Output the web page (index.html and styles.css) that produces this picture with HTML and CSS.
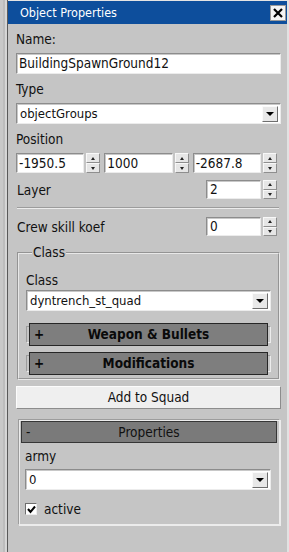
FILE: index.html
```html
<!DOCTYPE html>
<html lang="en">
<head>
    <meta charset="UTF-8">
    <title>Object Properties</title>
    <link rel="stylesheet" href="styles.css">
</head>
<body>
    <div class="screen">
        <div class="dock"></div>
        <div class="window">
            <div class="titlebar">
                <span class="title">Object Properties</span>
                <span class="close">
                    <svg width="10" height="10" viewBox="0 0 10 10"><path d="M1 1L9 9M9 1L1 9" stroke="#000" stroke-width="2.2"/></svg>
                </span>
            </div>
            <div class="content">
                <div class="label">Name:</div>
                <div class="field">BuildingSpawnGround12</div>

                <div class="label">Type</div>
                <div class="combo"><span>objectGroups</span><span class="drop"></span></div>

                <div class="label">Position</div>
                <div class="row position">
                    <div class="spinbox"><div class="field">-1950.5</div><div class="spin"><span class="up"></span><span class="down"></span></div></div>
                    <div class="spinbox"><div class="field">1000</div><div class="spin"><span class="up"></span><span class="down"></span></div></div>
                    <div class="spinbox"><div class="field">-2687.8</div><div class="spin"><span class="up"></span><span class="down"></span></div></div>
                </div>

                <div class="row pair layer">
                    <span>Layer</span>
                    <div class="spinbox small"><div class="field">2</div><div class="spin"><span class="up"></span><span class="down"></span></div></div>
                </div>

                <div class="separator"></div>

                <div class="row pair crew">
                    <span>Crew skill koef</span>
                    <div class="spinbox small"><div class="field">0</div><div class="spin"><span class="up"></span><span class="down"></span></div></div>
                </div>

                <fieldset class="group">
                    <legend>Class</legend>
                    <div class="label">Class</div>
                    <div class="combo"><span>dyntrench_st_quad</span><span class="drop"></span></div>
                    <div class="fold"><div class="fold-head"><span class="sign">+</span>Weapon &amp; Bullets</div></div>
                    <div class="fold"><div class="fold-head"><span class="sign">+</span>Modifications</div></div>
                </fieldset>

                <div class="button">Add to Squad</div>

                <div class="props">
                    <div class="props-head"><span class="sign">-</span>Properties</div>
                    <div class="label">army</div>
                    <div class="combo"><span>0</span><span class="drop"></span></div>
                    <label class="check">
                        <span class="box"><svg width="9" height="9" viewBox="0 0 9 9"><path d="M1 4L3.5 7L8 1.5" fill="none" stroke="#000" stroke-width="2"/></svg></span>
                        active
                    </label>
                </div>
            </div>
        </div>
    </div>
</body>
</html>
```

FILE: styles.css
```css
* {
    box-sizing: border-box;
}
body {
    margin: 0;
    background-color: #c4c4c4;
    font-family: "DejaVu Sans Condensed", "DejaVu Sans", sans-serif;
    font-size: 13.5px;
    color: #111111;
}
.screen {
    display: flex;
    height: 552px;
}
.dock {
    width: 8px;
    background-color: #bdbdbd;
    border-left: 3px solid #c9c9c9;
    border-right: 1px solid #5a5a5a;
    box-shadow: inset -2px 0 0 #d6d6d6;
}
.window {
    flex: 1;
    border-top: 1px solid #e4e4e4;
    border-right: 2px solid #e2e2e2;
    background-color: #c5c5c5;
}

.titlebar {
    height: 23px;
    background-color: #0d4e9c;
    display: flex;
    align-items: center;
    justify-content: space-between;
    padding: 0 1px 0 12px;
}
.title {
    color: #ffffff;
    font-size: 12.5px;
}
.close {
    width: 16px;
    height: 16px;
    background-color: #f4f4f4;
    border: 1px solid #9a9a9a;
    display: flex;
    align-items: center;
    justify-content: center;
}

.content {
    padding: 7px 6px 0 8px;
}
.label {
    height: 17px;
    line-height: 17px;
    margin-bottom: 5px;
}
.field {
    height: 21px;
    line-height: 19px;
    padding-left: 2px;
    background-color: #ffffff;
    border: 1px solid;
    border-color: #8c8c8c #ececec #ececec #8c8c8c;
    box-shadow: inset 1px 1px 0 #c8c8c8;
    font-size: 13.5px;
    white-space: nowrap;
    overflow: hidden;
}
.content > .field,
.content > .combo {
    margin-bottom: 7px;
}
.combo {
    height: 21px;
    display: flex;
    align-items: center;
    justify-content: space-between;
    background-color: #ffffff;
    border: 1px solid;
    border-color: #8c8c8c #ececec #ececec #8c8c8c;
    box-shadow: inset 1px 1px 0 #c8c8c8;
    padding: 0 2px 0 3px;
    font-size: 13px;
}
.drop {
    width: 16px;
    height: 16px;
    background-color: #e8e8e8;
    border: 1px solid;
    border-color: #fafafa #6e6e6e #6e6e6e #fafafa;
    display: flex;
    align-items: center;
    justify-content: center;
}
.drop::after {
    content: '';
    border-left: 4px solid transparent;
    border-right: 4px solid transparent;
    border-top: 4px solid #000000;
}

.row {
    display: flex;
    align-items: center;
}
.position {
    gap: 4px;
    padding-right: 4px;
    margin-bottom: 7px;
}
.position .spinbox {
    flex: 1;
}
.spinbox {
    display: flex;
    gap: 2px;
    height: 20px;
}
.spinbox .field {
    flex: 1;
    height: 20px;
    line-height: 18px;
}
.spin {
    width: 14px;
    display: flex;
    flex-direction: column;
}
.spin span {
    flex: 1;
    background-color: #e6e6e6;
    border: 1px solid;
    border-color: #f8f8f8 #8e8e8e #8e8e8e #f8f8f8;
    display: flex;
    align-items: center;
    justify-content: center;
}
.spin .up::after {
    content: '';
    border-left: 2px solid transparent;
    border-right: 2px solid transparent;
    border-bottom: 3px solid #222222;
}
.spin .down::after {
    content: '';
    border-left: 2px solid transparent;
    border-right: 2px solid transparent;
    border-top: 3px solid #222222;
}
.pair {
    justify-content: space-between;
    padding: 0 4px 0 1px;
}
.pair .spinbox {
    width: 71px;
    height: 19px;
}
.pair .field {
    height: 19px;
    line-height: 17px;
    padding-left: 3px;
}
.layer {
    margin-bottom: 8px;
}
.separator {
    height: 2px;
    margin: 0 2px 0 1px;
    border-top: 1px solid #9c9c9c;
    border-bottom: 1px solid #ececec;
}
.crew {
    margin-top: 8px;
}

.group {
    margin: 8px 1px 0 1px;
    padding: 11px 7px 0 7px;
    border: 2px groove #e8e8e8;
}
.group legend {
    padding: 0 1px;
    margin-left: 6px;
    line-height: 17px;
}
.group .label {
    margin-bottom: 1px;
}
.group .combo {
    margin-bottom: 12px;
}
.fold {
    position: relative;
    margin-bottom: 6px;
    padding: 0 3px;
}
.fold:last-child {
    margin-bottom: 3px;
}
.fold::before {
    content: '';
    position: absolute;
    left: 0;
    right: 0;
    top: 3px;
    bottom: 3px;
    border: 1px solid #9c9c9c;
    border-right-color: #ececec;
    border-bottom-color: #ececec;
}
.fold-head {
    position: relative;
    height: 23px;
    line-height: 21px;
    background-color: #7e7e7e;
    border: 1px solid #262626;
    font-weight: bold;
    font-size: 13.5px;
    text-align: center;
    color: #0a0a0a;
}
.sign {
    position: absolute;
    left: 4px;
    top: 0;
}

.button {
    height: 23px;
    line-height: 21px;
    margin-top: 6px;
    background-color: #efefef;
    border: 1px solid;
    border-color: #fcfcfc #8c8c8c #8c8c8c #fcfcfc;
    text-align: center;
}

.props {
    margin: 10px 1px 0 2px;
    height: 106px;
    padding: 1px 2px 0 2px;
    border: 1px solid #9c9c9c;
    border-right-color: #ececec;
    border-bottom-color: #ececec;
    box-shadow: 1px 1px 0 #ececec, inset 1px 1px 0 #ececec;
}
.props-head {
    position: relative;
    height: 22px;
    line-height: 20px;
    background-color: #7a7a7a;
    border: 1px solid #363636;
    text-align: center;
    margin-bottom: 5px;
}
.props .label,
.props .combo {
    margin-left: 4px;
    margin-right: 6px;
}
.props .label {
    margin-bottom: 4px;
}
.check {
    display: flex;
    align-items: center;
    gap: 7px;
    margin: 11px 0 0 4px;
}
.box {
    width: 12px;
    height: 12px;
    background-color: #ffffff;
    border: 1px solid;
    border-color: #6e6e6e #ececec #ececec #6e6e6e;
    display: flex;
    align-items: center;
    justify-content: center;
}
```
